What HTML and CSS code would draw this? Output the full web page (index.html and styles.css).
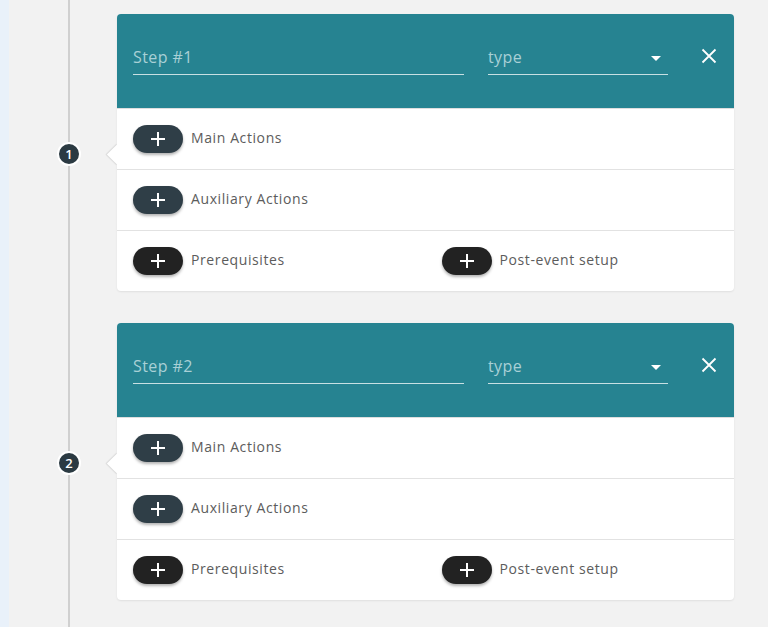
FILE: index.html
```html
<!DOCTYPE html>
<html>
<head>
<meta charset="utf-8">
<link rel="stylesheet" href="styles.css">
</head>
<body>
<div class="page">
  <div class="strip"></div>
  <div class="timeline">
    <div class="step">
      <div class="rail"><div class="badge">1</div></div>
      <div class="card">
        <div class="pointer"></div>
        <div class="card-head">
          <div class="field name"><span class="placeholder">Step #1</span></div>
          <div class="field select"><span class="placeholder">type</span><span class="caret"></span></div>
          <button class="close" aria-label="Remove">
            <svg width="16" height="16" viewBox="0 0 16 16"><path d="M1.5 1.5 L14.5 14.5 M14.5 1.5 L1.5 14.5" stroke="#fff" stroke-width="1.8" fill="none"/></svg>
          </button>
        </div>
        <div class="row"><div class="item"><span class="add dark"><svg width="16" height="16" viewBox="0 0 16 16"><path d="M8 1 V15 M1 8 H15" stroke="#fff" stroke-width="2"/></svg></span><span class="label">Main Actions</span></div></div>
        <div class="row"><div class="item"><span class="add dark"><svg width="16" height="16" viewBox="0 0 16 16"><path d="M8 1 V15 M1 8 H15" stroke="#fff" stroke-width="2"/></svg></span><span class="label">Auxiliary Actions</span></div></div>
        <div class="row split">
          <div class="item"><span class="add black"><svg width="16" height="16" viewBox="0 0 16 16"><path d="M8 1 V15 M1 8 H15" stroke="#fff" stroke-width="2"/></svg></span><span class="label">Prerequisites</span></div>
          <div class="item"><span class="add black"><svg width="16" height="16" viewBox="0 0 16 16"><path d="M8 1 V15 M1 8 H15" stroke="#fff" stroke-width="2"/></svg></span><span class="label">Post-event setup</span></div>
        </div>
      </div>
    </div>
    <div class="step">
      <div class="rail"><div class="badge">2</div></div>
      <div class="card">
        <div class="pointer"></div>
        <div class="card-head">
          <div class="field name"><span class="placeholder">Step #2</span></div>
          <div class="field select"><span class="placeholder">type</span><span class="caret"></span></div>
          <button class="close" aria-label="Remove">
            <svg width="16" height="16" viewBox="0 0 16 16"><path d="M1.5 1.5 L14.5 14.5 M14.5 1.5 L1.5 14.5" stroke="#fff" stroke-width="1.8" fill="none"/></svg>
          </button>
        </div>
        <div class="row"><div class="item"><span class="add dark"><svg width="16" height="16" viewBox="0 0 16 16"><path d="M8 1 V15 M1 8 H15" stroke="#fff" stroke-width="2"/></svg></span><span class="label">Main Actions</span></div></div>
        <div class="row"><div class="item"><span class="add dark"><svg width="16" height="16" viewBox="0 0 16 16"><path d="M8 1 V15 M1 8 H15" stroke="#fff" stroke-width="2"/></svg></span><span class="label">Auxiliary Actions</span></div></div>
        <div class="row split">
          <div class="item"><span class="add black"><svg width="16" height="16" viewBox="0 0 16 16"><path d="M8 1 V15 M1 8 H15" stroke="#fff" stroke-width="2"/></svg></span><span class="label">Prerequisites</span></div>
          <div class="item"><span class="add black"><svg width="16" height="16" viewBox="0 0 16 16"><path d="M8 1 V15 M1 8 H15" stroke="#fff" stroke-width="2"/></svg></span><span class="label">Post-event setup</span></div>
        </div>
      </div>
    </div>
  </div>
</div>
</body>
</html>
```
FILE: styles.css
```css
* { box-sizing: border-box; }
html, body { margin: 0; padding: 0; }
body {
  background: #f2f2f2;
  font-family: "Open Sans", "Liberation Sans", sans-serif;
  height: 627px;
  overflow: hidden;
}
.page {
  display: flex;
  height: 627px;
}
.strip {
  width: 9px;
  background: #e9f1fa;
  flex: none;
}
.timeline {
  flex: 1;
  padding-top: 14px;
  background: linear-gradient(#d0d0d0, #d0d0d0) no-repeat 59px 0 / 2px 100%;
}
.step {
  display: flex;
  margin-bottom: 32px;
}
.rail {
  width: 108px;
  flex: none;
  display: flex;
  justify-content: flex-start;
}
.badge {
  margin-top: 128px;
  margin-left: 48px;
  width: 24px;
  height: 24px;
  border-radius: 50%;
  background: #2b3a42;
  border: 2px solid #fff;
  color: #fff;
  font-size: 13px;
  font-weight: 600;
  line-height: 20px;
  text-align: center;
}
.card {
  position: relative;
  width: 617px;
  background: #fff;
  border-radius: 4px;
  box-shadow: 0 1px 2px rgba(0,0,0,0.08);
}
.pointer {
  position: absolute;
  left: -7px;
  top: 133px;
  width: 15px;
  height: 15px;
  background: #fff;
  transform: rotate(45deg);
  box-shadow: -1px 1px 1px rgba(0,0,0,0.1);
}
.card-head {
  position: relative;
  display: flex;
  align-items: flex-start;
  height: 95px;
  padding: 27px 16px 0 16px;
  background: #268391;
  border-radius: 4px 4px 0 0;
  border-bottom: 1px solid #dedede;
}
.field {
  height: 34px;
  border-bottom: 1px solid rgba(255,255,255,0.75);
  display: flex;
  align-items: center;
  font-size: 16px;
  line-height: 33px;
  padding-bottom: 1px;
  letter-spacing: 0.4px;
}
.placeholder { color: #a9d0d6; }
.name { flex: 1; }
.select {
  width: 180px;
  margin-left: 24px;
  justify-content: space-between;
  padding-right: 7px;
}
.caret {
  width: 0;
  height: 0;
  border-left: 5px solid transparent;
  border-right: 5px solid transparent;
  border-top: 5px solid #fff;
  margin-top: 2px;
}
.close {
  margin-left: 32px;
  width: 18px;
  height: 18px;
  margin-top: 6px;
  padding: 0;
  border: 0;
  background: none;
  display: flex;
  align-items: center;
  justify-content: center;
}
.row {
  height: 61px;
  border-bottom: 1px solid #e2e2e2;
  display: flex;
  align-items: center;
}
.row.split { border-bottom: 0; height: 60px; }
.row.split .item { width: 50%; }
.item {
  display: flex;
  align-items: center;
  padding-left: 16px;
}
.add {
  width: 50px;
  height: 28px;
  border-radius: 14px;
  display: flex;
  align-items: center;
  justify-content: center;
  box-shadow: 0 2px 3px rgba(0,0,0,0.3);
  flex: none;
}
.add.dark { background: #2f3e47; }
.add.black { background: #222222; }
.label {
  margin-left: 8px;
  padding-bottom: 3px;
  font-size: 14px;
  color: #5c5c5c;
  letter-spacing: 0.6px;
}
```
